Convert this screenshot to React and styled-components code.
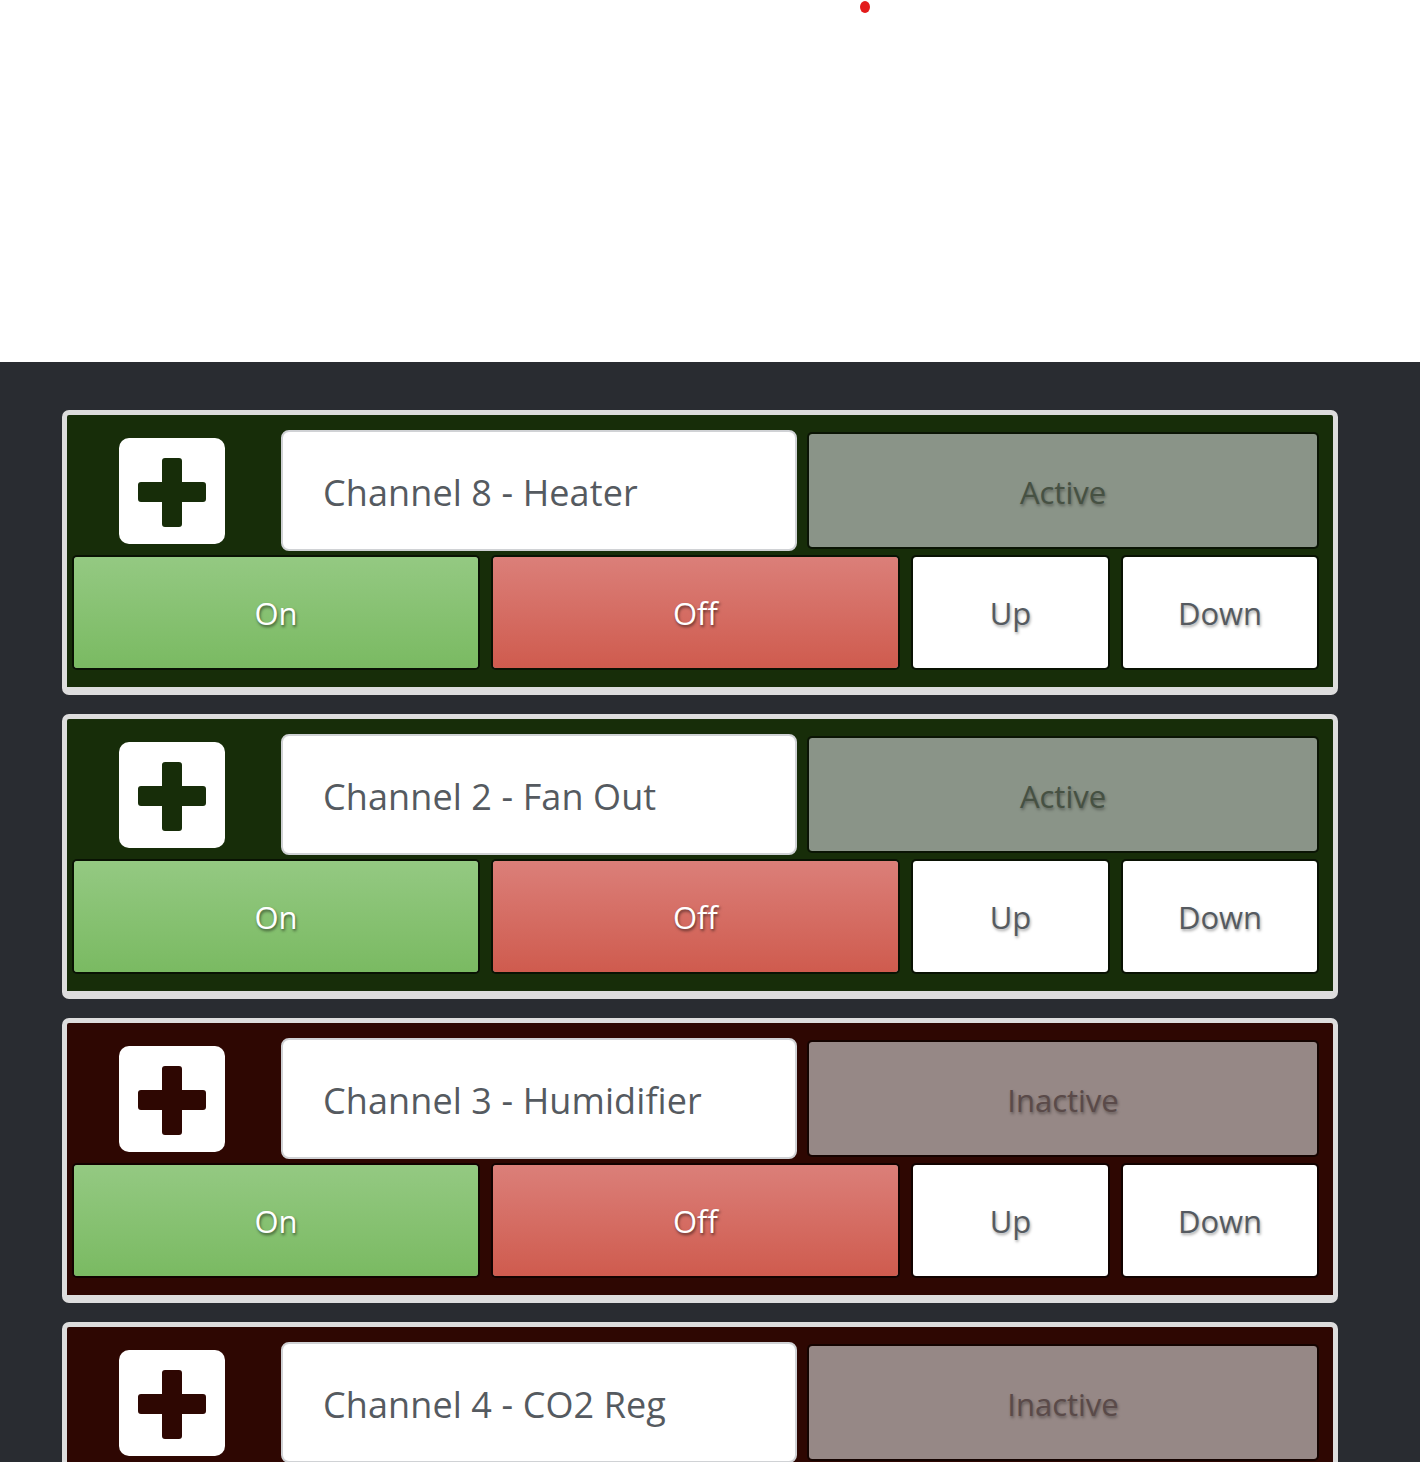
import React from "react";
import styled, { createGlobalStyle } from "styled-components";

const Global = createGlobalStyle`
  html, body { margin: 0; padding: 0; background: #292c31; }
  body { font-family: "Open Sans", "Noto Sans", sans-serif; }
`;

const Header = styled.div`
  height: 362px;
  background: #ffffff;
  position: relative;
`;

const Dot = styled.span`
  position: absolute;
  left: 860px;
  top: 1px;
  width: 10px;
  height: 12px;
  border-radius: 50%;
  background: #e31b1b;
`;

const Main = styled.main`
  background: #292c31;
  padding: 48px 82px 40px 62px;
  display: flex;
  flex-direction: column;
  gap: 19px;
`;

const Card = styled.section`
  width: 1276px;
  box-sizing: border-box;
  border: 5px solid #dddddd;
  border-bottom-width: 8px;
  border-radius: 7px;
  background: ${(p) => (p.$active ? "#172d09" : "#2e0702")};
  padding: 15px 14px 17px 5px;
  display: flex;
  flex-direction: column;
  gap: 4px;
`;

const TopRow = styled.div`
  display: grid;
  grid-template-columns: 199px 516px 512px;
  column-gap: 10px;
  height: 121px;
  align-items: center;
`;

const IconCell = styled.div`
  display: flex;
  justify-content: center;
  align-items: center;
`;

const NameBox = styled.div`
  box-sizing: border-box;
  height: 121px;
  background: #ffffff;
  border: 2px solid #d0d2d5;
  border-radius: 8px;
  display: flex;
  align-items: center;
  padding: 4px 0 0 40px;
  font-size: 36px;
  letter-spacing: 0.1px;
  color: #555a60;
`;

const Status = styled.div`
  box-sizing: border-box;
  height: 117px;
  border: 2px solid rgba(0, 0, 0, 0.55);
  background-clip: padding-box;
  background-color: ${(p) => (p.$active ? "#8a9488" : "#968886")};
  border-radius: 5px;
  display: flex;
  align-items: center;
  justify-content: center;
  font-size: 31px;
  color: ${(p) => (p.$active ? "#465143" : "#5a4a49")};
  text-shadow: 1px 2px 3px rgba(0, 0, 0, 0.35);
  padding-top: 2px;
`;

const ButtonRow = styled.div`
  display: grid;
  grid-template-columns: 408px 409px 199px 198px;
  column-gap: 11px;
  height: 115px;
`;

const Btn = styled.button`
  box-sizing: border-box;
  height: 115px;
  margin: 0;
  border: 2px solid rgba(0, 0, 0, 0.6);
  background-clip: padding-box;
  border-radius: 5px;
  font-family: "Open Sans", "Noto Sans", sans-serif;
  font-size: 31px;
  cursor: pointer;
  padding: 0;
  ${(p) =>
    p.$kind === "on"
      ? `background-image: linear-gradient(#94c982, #7aba62); color: #fff; text-shadow: 1px 2px 3px rgba(0,0,0,0.55);`
      : p.$kind === "off"
      ? `background-image: linear-gradient(#db7f79, #cf5b4e); color: #fff; text-shadow: 1px 2px 3px rgba(0,0,0,0.55);`
      : `background: #ffffff; background-clip: padding-box; color: #555a60; text-shadow: 1px 2px 3px rgba(0,0,0,0.35);`}
`;

function PlusIcon({ color }) {
  return (
    <svg width="106" height="106" viewBox="0 0 106 106">
      <rect x="0" y="0" width="106" height="106" rx="10" fill="#ffffff" />
      <path
        d="M46 20 h14 a3 3 0 0 1 3 3 v21 h21 a3 3 0 0 1 3 3 v14 a3 3 0 0 1 -3 3 h-21 v22 a3 3 0 0 1 -3 3 h-14 a3 3 0 0 1 -3 -3 v-22 h-21 a3 3 0 0 1 -3 -3 v-14 a3 3 0 0 1 3 -3 h21 v-21 a3 3 0 0 1 3 -3 z"
        fill={color}
      />
    </svg>
  );
}

const channels = [
  { name: "Channel 8 - Heater", active: true },
  { name: "Channel 2 - Fan Out", active: true },
  { name: "Channel 3 - Humidifier", active: false },
  { name: "Channel 4 - CO2 Reg", active: false },
];

export default function App() {
  return (
    <>
      <Global />
      <Header>
        <Dot />
      </Header>
      <Main>
        {channels.map((c) => (
          <Card key={c.name} $active={c.active}>
            <TopRow>
              <IconCell>
                <PlusIcon color={c.active ? "#172d09" : "#2e0702"} />
              </IconCell>
              <NameBox>{c.name}</NameBox>
              <Status $active={c.active}>{c.active ? "Active" : "Inactive"}</Status>
            </TopRow>
            <ButtonRow>
              <Btn $kind="on">On</Btn>
              <Btn $kind="off">Off</Btn>
              <Btn $kind="plain">Up</Btn>
              <Btn $kind="plain">Down</Btn>
            </ButtonRow>
          </Card>
        ))}
      </Main>
    </>
  );
}
